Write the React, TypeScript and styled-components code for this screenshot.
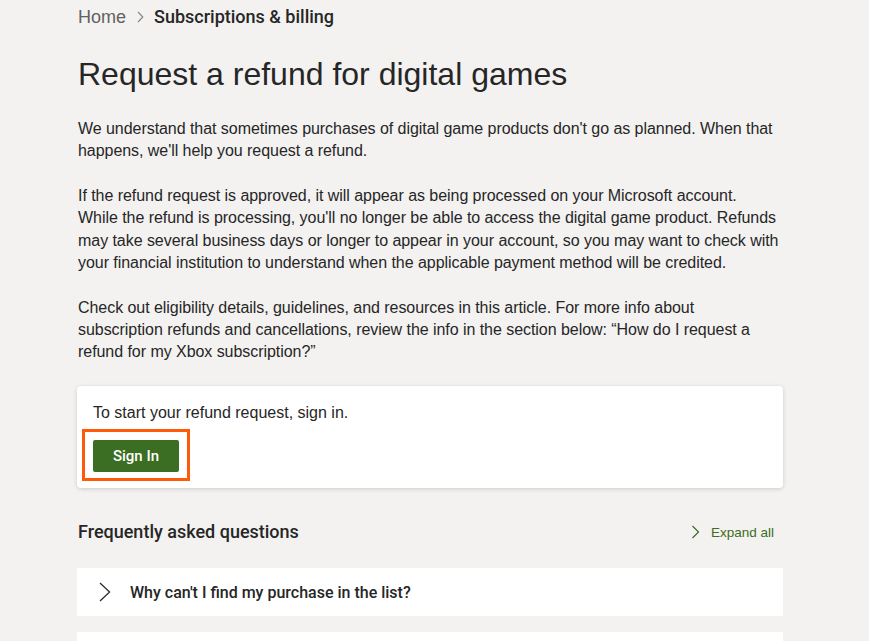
import React from 'react';
import styled, { createGlobalStyle } from 'styled-components';

const GlobalStyle = createGlobalStyle`
  body {
    margin: 0;
    background: #f3f2f1;
    font-family: "Liberation Sans", Arial, sans-serif;
    color: #262626;
  }
`;

// semibold labels use a medium weight so they keep their narrow width
const strongFont = `font-family: Roboto, "Liberation Sans", Arial, sans-serif; font-weight: 500;`;

const Page = styled.main`
  width: 706px;
  padding: 5px 0 0 77px;
`;

const Breadcrumb = styled.nav`
  display: flex;
  align-items: center;
  gap: 10px;
  font-size: 18px;
  line-height: 24px;
  padding-left: 1px;
`;

const Crumb = styled.span<{ $current?: boolean }>`
  color: ${(p) => (p.$current ? '#262626' : '#616161')};
  ${(p) => (p.$current ? strongFont : '')}
`;

const Title = styled.h1`
  font-size: 32px;
  font-weight: 400;
  line-height: 40px;
  margin: 25px 0 24px 1px;
  color: #262626;
`;

const Para = styled.p`
  font-size: 16px;
  line-height: 22.3px;
  letter-spacing: -0.05px;
  margin: 0 0 22.5px 1px;
`;

const Card = styled.section`
  background: #fff;
  border-radius: 4px;
  box-shadow: 0 1px 4px rgba(0, 0, 0, 0.16);
  padding: 16px 16px 7px;
  margin-top: 22px;
`;

const CardText = styled.div`
  font-size: 16px;
  line-height: 22px;
  margin-bottom: 5px;
`;

const Highlight = styled.div`
  width: fit-content;
  border: 3px solid #ff5a0a;
  padding: 8px 8px 6px 8px;
  margin-left: -11px;
`;

const SignInButton = styled.button`
  display: block;
  background: #3b6e22;
  color: #fff;
  border: none;
  border-radius: 2px;
  width: 86px;
  height: 32px;
  font-size: 15px;
  cursor: pointer;
  ${strongFont}
`;

const FaqHeader = styled.div`
  display: flex;
  align-items: center;
  justify-content: space-between;
  margin: 32px 0 24px;
`;

const FaqTitle = styled.h2`
  font-size: 18px;
  line-height: 24px;
  margin: 0 0 0 1px;
  ${strongFont}
`;

const ExpandAll = styled.button`
  display: flex;
  align-items: center;
  gap: 11px;
  border: none;
  background: none;
  color: #3b6e22;
  font-family: inherit;
  font-size: 13.5px;
  padding: 0 9px 0 0;
  cursor: pointer;
`;

const FaqItem = styled.div`
  display: flex;
  align-items: center;
  gap: 18px;
  background: #fff;
  height: 48px;
  padding: 0 0 0 19px;
  margin-bottom: 16px;
  font-size: 16px;
  ${strongFont}
`;

const Chevron = ({ w, h, color }: { w: number; h: number; color: string }) => (
  <svg width={w} height={h} viewBox={`0 0 ${w} ${h}`} fill="none">
    <path
      d={`M${w * 0.25} 1 L${w * 0.85} ${h / 2} L${w * 0.25} ${h - 1}`}
      stroke={color}
      strokeWidth="1.2"
    />
  </svg>
);

const faqs = [
  "Why can't I find my purchase in the list?",
  'Can I get a refund for a game I bought on disc?',
];

export default function App() {
  return (
    <>
      <GlobalStyle />
      <Page>
        <Breadcrumb>
          <Crumb>Home</Crumb>
          <Chevron w={8} h={12} color="#8a8886" />
          <Crumb $current>Subscriptions &amp; billing</Crumb>
        </Breadcrumb>

        <Title>Request a refund for digital games</Title>

        <Para>
          We understand that sometimes purchases of digital game products don't go as planned. When that
          happens, we'll help you request a refund.
        </Para>
        <Para>
          If the refund request is approved, it will appear as being processed on your Microsoft account.
          <br />
          While the refund is processing, you'll no longer be able to access the digital game product. Refunds
          <br />
          may take several business days or longer to appear in your account, so you may want to check with
          <br />
          your financial institution to understand when the applicable payment method will be credited.
        </Para>
        <Para>
          Check out eligibility details, guidelines, and resources in this article. For more info about
          subscription refunds and cancellations, review the info in the section below: “How do I request a
          refund for my Xbox subscription?”
        </Para>

        <Card>
          <CardText>To start your refund request, sign in.</CardText>
          <Highlight>
            <SignInButton>Sign In</SignInButton>
          </Highlight>
        </Card>

        <FaqHeader>
          <FaqTitle>Frequently asked questions</FaqTitle>
          <ExpandAll>
            <Chevron w={10} h={14} color="#3b6e22" />
            Expand all
          </ExpandAll>
        </FaqHeader>

        {faqs.map((q) => (
          <FaqItem key={q}>
            <Chevron w={16} h={20} color="#262626" />
            {q}
          </FaqItem>
        ))}
      </Page>
    </>
  );
}
